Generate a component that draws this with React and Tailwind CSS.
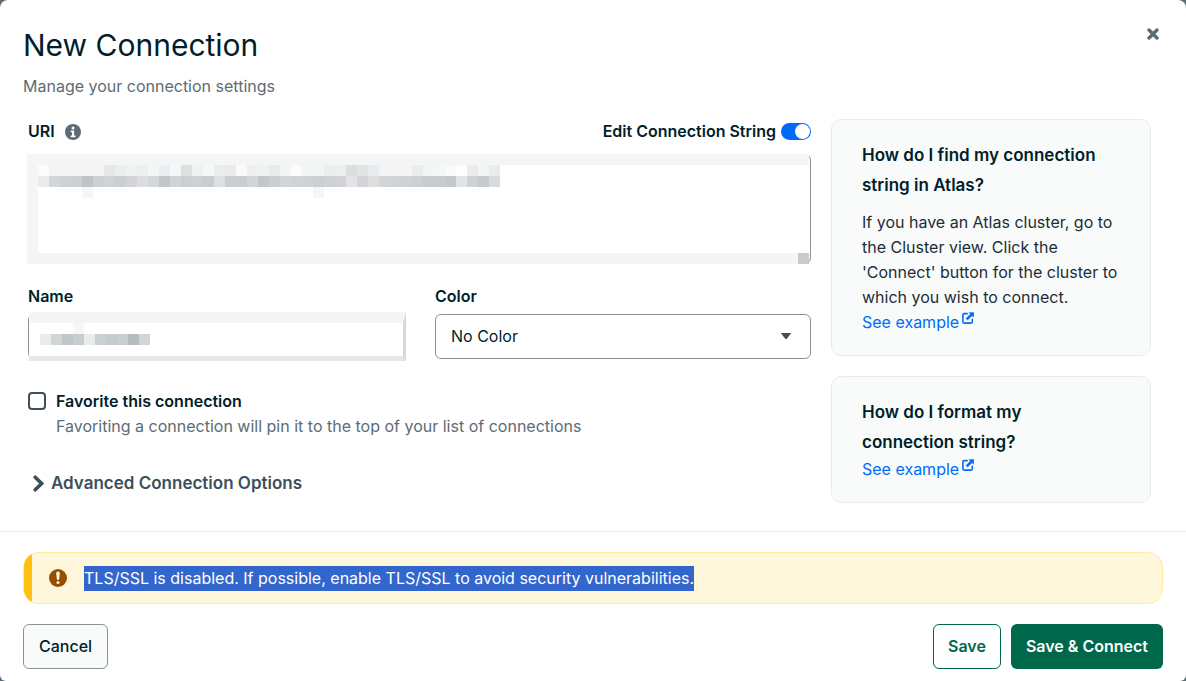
import React from "react";

const URI_CELLS = [
  "fbfbfb f3f5f4 f4f4f4 f5f4f4 f4f6f5 f5f5f5 e7e8ea ecedf0 f0f2f1 edeef1 f4f6f5 ecedf0 f5f6f8 dedfe1 f0f2f1 f5f6f6 ebecef e9eaec fafafa eeeff1 f0f1f3 e9eaec f3f5f4 fcfcfc f4f6f5 f3f5f4 ecedef edeef0 dbdfdf e3e4e6 e9eaed f3f4f7 f4f4f4 f5f5f4 e9ebed f3f5f4 f5f7f6 f9fbfa fdfdfd eaebed f3f5f4 e9ebed",
  "eaebed d3d6d9 cfd2d5 cdd0d2 bfc4c7 cdcfd2 d0d3d5 cbcfd2 d2d5d8 dddddf d4d8da c1c6c9 d1d4d7 cccfd2 ced1d3 c9ccd0 dce0e3 cbced1 cacdd0 d3d6d9 c3c7ca cbced1 d2d5d8 d0d3d6 cfd2d5 cbcfd2 ced1d4 d0d3d5 e3e3e5 d3d6d9 dddddf d2d5d8 cfd3d6 cfd2d5 cdd0d3 c9cccf c9cccf c4c8cb e3e4e6 ced2d5 c7cacd d8dbde",
  "- - - - f5f7f6 - - - - - - - - - - - - - - - - - - - - f5f7f6",
];

const NAME_CELLS = [
  "- - - f5f7fa",
  "e8eceb d1d5d8 c0c7c9 c9cdd2 e8eceb cbd0d3 c4cbcd c9ced1 b6bdbf d1d5d8",
];

function Mosaic({ rows, className }) {
  const cells = rows.map((row) => row.split(" "));
  const columns = Math.max(...cells.map((row) => row.length));
  return (
    <svg
      aria-hidden="true"
      width={columns * 11}
      height={cells.length * 11}
      shapeRendering="crispEdges"
      className={className}
    >
      {cells.map((row, y) =>
        row.map((color, x) =>
          color === "-" ? null : (
            <rect key={`${x}-${y}`} x={x * 11} y={y * 11} width="11" height="11" fill={`#${color}`} />
          ),
        ),
      )}
    </svg>
  );
}

function InfoIcon() {
  return (
    <svg width="16" height="16" viewBox="0 0 16 16" aria-hidden="true">
      <circle cx="8" cy="8" r="8" fill="#5c6c75" />
      <circle cx="8" cy="4" r="1.5" fill="#fff" />
      <path d="M5.7 6.6h3.4v5h1.3v1.6H5.7v-1.6H7V8.2H5.7z" fill="#fff" />
    </svg>
  );
}

function WarningIcon() {
  return (
    <svg width="18" height="18" viewBox="0 0 18 18" aria-hidden="true">
      <circle cx="9" cy="9" r="9" fill="#944f01" />
      <path d="M7.2 4.2a1.8 1.8 0 0 1 3.6 0l-.6 5.6a1.2 1.2 0 0 1-2.4 0z" fill="#fef7db" />
      <circle cx="9" cy="13.4" r="1.5" fill="#fef7db" />
    </svg>
  );
}

function OpenIcon() {
  return (
    <svg width="12" height="12" viewBox="0 0 12 12" aria-hidden="true" className="ml-[3px] inline-block -translate-y-1 align-baseline">
      <path d="M5.2 1.6H2.2A1.4 1.4 0 0 0 .9 3v6.8a1.3 1.3 0 0 0 1.3 1.3H9a1.3 1.3 0 0 0 1.3-1.3V7.2" fill="none" stroke="#016bf8" strokeWidth="1.6" strokeLinecap="round" />
      <path d="M11.9.5 11.7 5.2 10.1 3.7 5.6 8.1 4 6.5 8.4 2 6.9.4z" fill="#016bf8" stroke="#016bf8" strokeWidth=".4" strokeLinejoin="round" />
    </svg>
  );
}

function SeeExample() {
  return (
    <a href="#example" className="text-[#016bf8]">
      See example
      <OpenIcon />
    </a>
  );
}

function HelpCard({ children }) {
  return (
    <section className="rounded-[10px] border border-[#e8edeb] bg-[#f9fbfa] px-[30px] py-5">{children}</section>
  );
}

export default function App() {
  return (
    <div className="bg-[#5c6c75] font-['Inter','Liberation_Sans',sans-serif] text-base leading-[25px] text-[#001e2b]">
      <main role="dialog" aria-labelledby="title" className="rounded-t-lg rounded-b-md bg-white">
        <header className="flex items-start justify-between px-[23px] pt-6">
          <div>
            <h1 id="title" className="text-[30px] leading-[42px]">New Connection</h1>
            <p className="mt-2 text-[#5c6c75]">Manage your connection settings</p>
          </div>
          <button type="button" aria-label="Close" className="p-1">
            <svg width="12" height="12" viewBox="0 0 12 12" aria-hidden="true">
              <path d="M2 2l8 8M10 2l-8 8" stroke="#5c6c75" strokeWidth="3.4" strokeLinecap="round" />
            </svg>
          </button>
        </header>

        <div className="flex items-start gap-5 pt-5 pr-[35px] pb-7 pl-7">
          <form className="min-w-0 flex-1">
            <div className="flex items-center justify-between">
              <div className="flex items-center gap-[10px]">
                <label htmlFor="uri" className="font-semibold">URI</label>
                <InfoIcon />
              </div>
              <div className="flex items-center gap-[5px]">
                <label htmlFor="edit" className="font-semibold">Edit Connection String</label>
                <button
                  id="edit"
                  type="button"
                  role="switch"
                  aria-checked="true"
                  className="flex h-[17px] w-[30px] items-center justify-end rounded-full bg-[#016bf8] px-px"
                >
                  <span className="size-[15px] rounded-full bg-white" />
                </button>
              </div>
            </div>

            <div className="relative mt-[10px] -ml-px">
              <textarea id="uri" className="block h-[110px] w-full resize-none rounded-md border border-[#889397] p-3" />
              <div className="pointer-events-none absolute inset-y-0 right-0.5 left-0 border-y-[11px] border-l-[11px] border-[#f4f6f5] bg-white">
                <Mosaic rows={URI_CELLS} />
                <span className="absolute right-0 -bottom-[11px] size-[11px] bg-[#c9cbcd]" />
              </div>
            </div>

            <div className="mt-5 grid grid-cols-2 gap-[31px]">
              <div>
                <label htmlFor="name" className="block font-semibold">Name</label>
                <div className="relative mt-[5px]">
                  <input id="name" type="text" className="block h-[45px] w-full rounded-md border border-[#889397] px-3" />
                  <div className="pointer-events-none absolute -top-0.5 -right-0.5 -bottom-0.5 left-px border-t-[11px] border-r-[3px] border-b-[5px] border-t-[#f4f6f5] border-r-[#d5d9da] border-b-[#e5e8e8] bg-white pl-[11px]">
                    <Mosaic rows={NAME_CELLS} />
                  </div>
                </div>
              </div>
              <div>
                <label htmlFor="color" className="block font-semibold">Color</label>
                <div className="relative mt-[5px]">
                  <select id="color" className="block h-[45px] w-full appearance-none rounded-md border border-[#889397] bg-white px-[15px]">
                    <option>No Color</option>
                  </select>
                  <svg width="10" height="7" viewBox="0 0 10 7" aria-hidden="true" className="pointer-events-none absolute top-[19px] right-5">
                    <path d="M.5.5h9L5 6z" fill="#3d4f58" stroke="#3d4f58" strokeLinejoin="round" />
                  </svg>
                </div>
              </div>
            </div>

            <div className="mt-[30px] flex gap-[10px]">
              <input
                id="favorite"
                type="checkbox"
                className="mt-[3px] size-[18px] shrink-0 appearance-none rounded border-2 border-[#3d4f58] bg-white"
              />
              <div>
                <label htmlFor="favorite" className="block font-semibold">Favorite this connection</label>
                <p className="text-[#5c6c75]">Favoriting a connection will pin it to the top of your list of connections</p>
              </div>
            </div>

            <button type="button" className="mt-[30px] ml-[5px] flex h-7 items-center gap-[7px] text-[17px] font-semibold text-[#3d4f58]">
              <svg width="11" height="17" viewBox="0 0 11 17" aria-hidden="true">
                <path d="M2.2 2.2 8.6 8.5 2.2 14.8" fill="none" stroke="#3d4f58" strokeWidth="3.6" strokeLinecap="round" />
              </svg>
              Advanced Connection Options
            </button>
          </form>

          <aside className="flex w-80 shrink-0 flex-col gap-5">
            <HelpCard>
              <h2 className="text-[17px] leading-[30px] font-semibold">
                How do I find my connection string in Atlas?
              </h2>
              <p className="mt-[10px] text-[#1c2d38]">
                If you have an Atlas cluster, go to the Cluster view. Click the 'Connect' button for the cluster to which
                you wish to connect.
                <br />
                <SeeExample />
              </p>
            </HelpCard>
            <HelpCard>
              <h2 className="text-[17px] leading-[30px] font-semibold">
                How do I format my <br />
                connection string?
              </h2>
              <p>
                <SeeExample />
              </p>
            </HelpCard>
          </aside>
        </div>

        <footer className="border-t border-[#e8edeb] px-[23px] pt-5 pb-3">
          <div role="alert" className="flex h-[52px] overflow-hidden rounded-[15px] border border-[#ffec9e] bg-[#fef7db]">
            <span className="-my-px -ml-px w-[9px] bg-[#ffc010]" />
            <div className="flex items-center gap-[17px] pl-[17px]">
              <WarningIcon />
              <p className="bg-[#3366cc] text-white">
                TLS/SSL is disabled. If possible, enable TLS/SSL to avoid security vulnerabilities.
              </p>
            </div>
          </div>
          <div className="mt-5 flex gap-[10px]">
            <button type="button" className="mr-auto h-[45px] rounded-md border border-[#889397] bg-[#f9fbfa] px-[15px] font-medium">
              Cancel
            </button>
            <button type="button" className="h-[45px] rounded-md border border-[#00684a] bg-white px-[14px] font-semibold text-[#00684a]">
              Save
            </button>
            <button type="button" className="h-[45px] rounded-md bg-[#00684a] px-[15px] font-semibold text-white">
              Save &amp; Connect
            </button>
          </div>
        </footer>
      </main>
    </div>
  );
}
